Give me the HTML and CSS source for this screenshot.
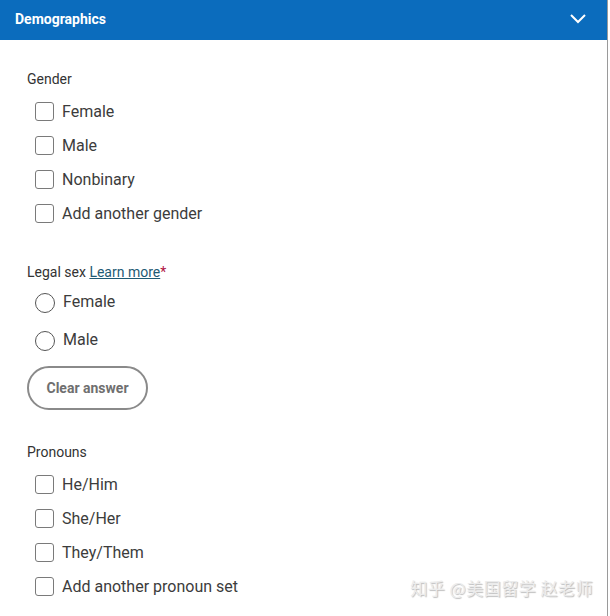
FILE: index.html
```html
<!DOCTYPE html>
<html>
<head>
    <title>Demographics</title>
    <link rel="stylesheet" href="styles.css">
</head>
<body>
    <div id="panel">
        <div class="panel-header">
            <span class="panel-title">Demographics</span>
            <svg class="chevron" width="16" height="10" viewBox="0 0 16 10">
                <path d="M1 1 L8 8 L15 1" fill="none" stroke="#fff" stroke-width="2"/>
            </svg>
        </div>

        <div class="panel-body">
            <div class="field">
                <div class="field-label">Gender</div>
                <label class="option"><span class="box"></span>Female</label>
                <label class="option"><span class="box"></span>Male</label>
                <label class="option"><span class="box"></span>Nonbinary</label>
                <label class="option"><span class="box"></span>Add another gender</label>
            </div>

            <div class="field">
                <div class="field-label">Legal sex <a href="#" class="learn">Learn more</a><span class="req">*</span></div>
                <label class="option radio"><span class="circle"></span>Female</label>
                <label class="option radio"><span class="circle"></span>Male</label>
                <button type="button" class="clear-btn">Clear answer</button>
            </div>

            <div class="field">
                <div class="field-label">Pronouns</div>
                <label class="option"><span class="box"></span>He/Him</label>
                <label class="option"><span class="box"></span>She/Her</label>
                <label class="option"><span class="box"></span>They/Them</label>
                <label class="option"><span class="box"></span>Add another pronoun set</label>
            </div>
        </div>

        <div class="watermark">知乎 @美国留学 赵老师</div>
    </div>
</body>
</html>
```

FILE: styles.css
```css
body {
    margin: 0;
    font-family: Roboto, "Liberation Sans", Arial, sans-serif;
    background-color: #fff;
    color: #333;
}

#panel {
    position: relative;
    width: 607px;
    height: 616px;
    border-right: 1px solid #9a9a9a;
    overflow: hidden;
}

.panel-header {
    display: flex;
    align-items: center;
    justify-content: space-between;
    height: 40px;
    padding: 0 21px 0 15px;
    background-color: #0b6cbd;
    color: #fff;
}

.panel-title {
    font-size: 14px;
    font-weight: bold;
    padding-bottom: 3px;
}

.chevron {
    display: block;
    margin-bottom: 3px;
}

.panel-body {
    padding: 29px 27px 0;
}

.field {
    margin-bottom: 32px;
}

.field-label {
    font-size: 14px;
    line-height: 20px;
    color: #333;
    margin-bottom: 5px;
}

.learn {
    color: #1e5a74;
    text-decoration: underline;
}

.req {
    color: #b0123f;
}

.option {
    display: flex;
    align-items: center;
    height: 34px;
    padding-left: 8px;
    font-size: 16px;
    color: #3c3c3c;
}

.box {
    width: 17px;
    height: 17px;
    border: 1.5px solid #7a7a7a;
    border-radius: 3px;
    margin-right: 8px;
}

.radio {
    height: 38px;
}

.field-label + .radio {
    margin-top: -5px;
}

.circle {
    width: 18px;
    height: 18px;
    border: 1.5px solid #555;
    border-radius: 50%;
    margin-right: 8px;
    margin-top: 3px;
}

.clear-btn {
    margin-top: 8px;
    width: 121px;
    height: 44px;
    border: 2px solid #8a8a8a;
    border-radius: 22px;
    background-color: #fff;
    color: #6f6f6f;
    font-family: Roboto, "Liberation Sans", Arial, sans-serif;
    font-size: 14px;
    font-weight: bold;
    cursor: pointer;
}

.watermark {
    position: absolute;
    right: 14px;
    bottom: 16px;
    font-family: "Noto Sans CJK SC", sans-serif;
    font-size: 17px;
    color: #ececec;
    text-shadow: 1px 1px 1px #bdbdbd;
    letter-spacing: 0.5px;
}
```
